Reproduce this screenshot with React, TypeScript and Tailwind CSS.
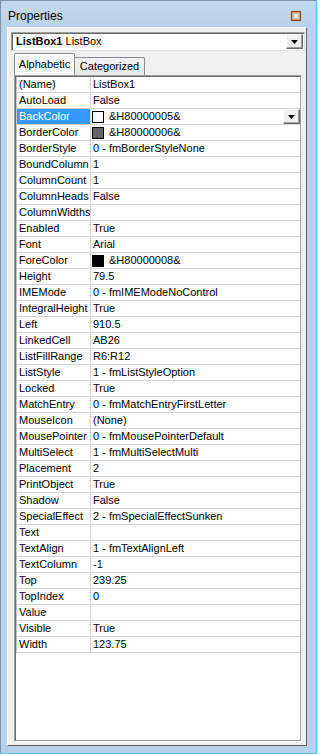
import React from 'react';

interface PropRow {
  name: string;
  value: string;
  swatch?: string;
  selected?: boolean;
}

const rows: PropRow[] = [
  { name: '(Name)', value: 'ListBox1' },
  { name: 'AutoLoad', value: 'False' },
  { name: 'BackColor', value: '&H80000005&', swatch: 'bg-white', selected: true },
  { name: 'BorderColor', value: '&H80000006&', swatch: 'bg-[#646464]' },
  { name: 'BorderStyle', value: '0 - fmBorderStyleNone' },
  { name: 'BoundColumn', value: '1' },
  { name: 'ColumnCount', value: '1' },
  { name: 'ColumnHeads', value: 'False' },
  { name: 'ColumnWidths', value: '' },
  { name: 'Enabled', value: 'True' },
  { name: 'Font', value: 'Arial' },
  { name: 'ForeColor', value: '&H80000008&', swatch: 'bg-black' },
  { name: 'Height', value: '79.5' },
  { name: 'IMEMode', value: '0 - fmIMEModeNoControl' },
  { name: 'IntegralHeight', value: 'True' },
  { name: 'Left', value: '910.5' },
  { name: 'LinkedCell', value: 'AB26' },
  { name: 'ListFillRange', value: 'R6:R12' },
  { name: 'ListStyle', value: '1 - fmListStyleOption' },
  { name: 'Locked', value: 'True' },
  { name: 'MatchEntry', value: '0 - fmMatchEntryFirstLetter' },
  { name: 'MouseIcon', value: '(None)' },
  { name: 'MousePointer', value: '0 - fmMousePointerDefault' },
  { name: 'MultiSelect', value: '1 - fmMultiSelectMulti' },
  { name: 'Placement', value: '2' },
  { name: 'PrintObject', value: 'True' },
  { name: 'Shadow', value: 'False' },
  { name: 'SpecialEffect', value: '2 - fmSpecialEffectSunken' },
  { name: 'Text', value: '' },
  { name: 'TextAlign', value: '1 - fmTextAlignLeft' },
  { name: 'TextColumn', value: '-1' },
  { name: 'Top', value: '239.25' },
  { name: 'TopIndex', value: '0' },
  { name: 'Value', value: '' },
  { name: 'Visible', value: 'True' },
  { name: 'Width', value: '123.75' },
];

// small black arrow used in combo buttons
const DownArrow = () => (
  <svg width="7" height="4" viewBox="0 0 7 4">
    <path d="M0 0h7L3.5 4z" fill="#000" />
  </svg>
);

const ComboButton: React.FC<{ className?: string }> = ({ className }) => (
  <div
    className={`flex items-center justify-center bg-[#f0f0f0] border border-t-white border-l-white border-r-[#696969] border-b-[#696969] shadow-[inset_-1px_-1px_0_#a0a0a0] ${className ?? ''}`}
  >
    <DownArrow />
  </div>
);

const App: React.FC = () => {
  return (
    <div
      className="w-[317px] h-[754px] flex flex-col bg-[#b9d1ea] border border-t-[#8393a6] border-l-[#8393a6] border-r-[#3cc6e2] border-b-[#3cc6e2] pl-[6px] pr-[9px] pb-[7px] text-black"
      style={{ fontFamily: '"Liberation Sans", Arial, sans-serif' }}
    >
      {/* Title bar */}
      <div className="h-[26px] flex items-center justify-between pt-[3px] bg-gradient-to-b from-[#c3d9ef] to-[#b9d1ea] -ml-[6px] -mr-[9px] pl-[7px] pr-[15px]">
        <span className="text-[12px] leading-none">Properties</span>
        <div className="w-[10px] h-[10px] border border-[#8b3b18] bg-[#e2a36d] flex items-center justify-center">
          <div className="w-[6px] h-[6px] bg-[#b9bcc2] flex items-center justify-center">
            <svg width="6" height="6" viewBox="0 0 6 6">
              <path d="M1 1l4 4M5 1l-4 4" stroke="#fff" strokeWidth="1.3" />
            </svg>
          </div>
        </div>
      </div>

      {/* Panel */}
      <div className="flex-1 flex flex-col bg-[#f0f0f0] border border-t-white border-l-white border-r-[#646464] border-b-[#646464]">
        {/* Object combo */}
        <div className="mt-[4px] ml-[3px] mr-[1px] h-[19px] flex items-center bg-white border border-t-[#a0a0a0] border-l-[#a0a0a0] border-r-[#e3e3e3] border-b-[#e3e3e3] shadow-[inset_1px_1px_0_#696969]">
          <span className="pl-[4px] text-[11px] leading-none">
            <b>ListBox1</b> ListBox
          </span>
          <ComboButton className="ml-auto mr-[1px] w-[17px] h-[15px]" />
        </div>

        {/* Tabs */}
        <div className="mt-[2px] h-[22px] flex items-end pl-[6px] text-[11px]">
          <div className="h-[22px] w-[61px] flex items-center justify-center bg-[#fbfbfb] border border-b-0 border-[#898c95] rounded-t-[2px]">
            Alphabetic
          </div>
          <div className="h-[18px] w-[70px] flex items-center justify-center bg-gradient-to-b from-[#f3f3f3] to-[#e8e8e8] border border-b-0 border-l-0 border-[#898c95] rounded-tr-[2px]">
            Categorized
          </div>
        </div>

        {/* Property grid */}
        <div className="flex-1 ml-[6px] mr-[4px] mb-[3px] flex border border-t-[#a0a0a0] border-l-[#a0a0a0] border-r-white border-b-white">
          <div className="flex-1 bg-white border border-t-[#696969] border-l-[#696969] border-r-[#a0a0a0] border-b-[#a0a0a0]">
            <div className="border-l border-[#c8c8c8] text-[11px]">
              {rows.map((row) => (
                <div key={row.name} className="h-[16px] flex border-b border-[#d4d4d4]">
                  <div
                    className={`w-[74px] shrink-0 border-r border-[#d4d4d4] pl-[2px] flex items-center leading-none whitespace-nowrap overflow-hidden ${
                      row.selected ? 'bg-[#3399ff] text-white' : ''
                    }`}
                  >
                    {row.name}
                  </div>
                  <div className="flex-1 flex items-center leading-none pl-[1px]">
                    {row.swatch && (
                      <span className={`w-[12px] h-[12px] border border-black mr-[5px] ${row.swatch}`} />
                    )}
                    <span className={row.swatch ? '' : 'pl-[1px]'}>{row.value}</span>
                    {row.selected && <ComboButton className="ml-auto w-[17px] h-[15px]" />}
                  </div>
                </div>
              ))}
            </div>
          </div>
        </div>
      </div>
    </div>
  );
};

export default App;
